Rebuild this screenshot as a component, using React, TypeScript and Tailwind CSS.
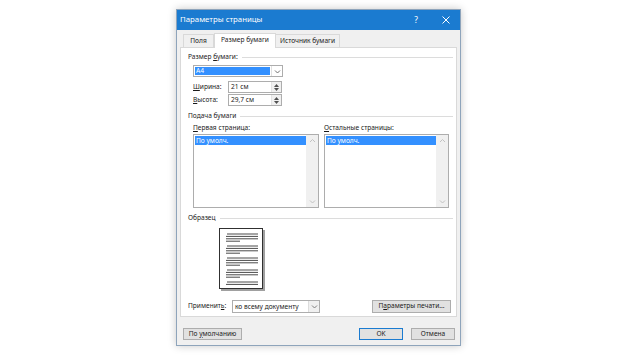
import React from "react";

const Chevron = ({ up = false, color = "#606060" }: { up?: boolean; color?: string }) => (
  <svg width="7" height="5" viewBox="0 0 7 5" className="block">
    <path d={up ? "M1 4 L3.5 1.5 L6 4" : "M1 1.5 L3.5 4 L6 1.5"} fill="none" stroke={color} strokeWidth="1" />
  </svg>
);

const Spinner = () => (
  <div className="w-[10px] h-full flex flex-col items-center justify-center gap-[1px] bg-[#f0f0f0] border-l border-[#e3e3e3]">
    <svg width="5" height="3" viewBox="0 0 5 3" className="block">
      <path d="M0 3 L2.5 0 L5 3 Z" fill="#505050" />
    </svg>
    <svg width="5" height="3" viewBox="0 0 5 3" className="block">
      <path d="M0 0 L2.5 3 L5 0 Z" fill="#505050" />
    </svg>
  </div>
);

const SectionLabel = ({ children, mt }: { children: React.ReactNode; mt: string }) => (
  <div className={`flex items-center h-[10px] pl-[7px] pr-[3px] ${mt}`}>
    <span className="leading-none whitespace-nowrap">{children}</span>
    <div className="flex-1 h-px bg-[#dcdcdc] ml-[4px]" />
  </div>
);

const ListBox = ({ w }: { w: string }) => (
  <div className={`${w} h-[74px] border border-[#adadad] bg-white flex`}>
    <div className="flex-1 pt-px pl-px">
      <div className="h-[9px] bg-[#3390ff] text-white leading-[9px] pl-[1px]">По умолч.</div>
    </div>
    <div className="w-[12px] bg-[#f0f0f0] flex flex-col items-center justify-between py-[3px]">
      <Chevron up color="#c2c2c2" />
      <Chevron color="#c2c2c2" />
    </div>
  </div>
);

const Preview = () => {
  const lines: React.ReactNode[] = [];
  const starts = [5, 17, 29, 41, 53];
  starts.forEach((s, pi) => {
    for (let i = 0; i < 4; i++) {
      const y = s + i * 2.4;
      if (y > 57) break;
      const x1 = i === 0 ? 7 : 6;
      const x2 = i === 3 ? 20 : 38;
      lines.push(<line key={`${pi}-${i}`} x1={x1} x2={x2} y1={y} y2={y} stroke="#4a4a4a" strokeWidth="1" />);
    }
  });
  return (
    <div className="ml-[38px] mt-[5px] w-[44px] h-[61px] bg-white border border-[#303030] shadow-[2px_2px_0_#a0a0a0]">
      <svg width="42" height="59" viewBox="0 0 42 59" className="block">
        {lines}
      </svg>
    </div>
  );
};

export default function App() {
  return (
    <div className="w-[640px] h-[360px] bg-white pt-[9px] pl-[176px] font-['Noto_Sans',sans-serif] text-[6.6px] text-[#1a1a1a]">
      <div className="w-[285px] h-[337px] flex flex-col bg-[#f0f0f0] border border-[#8ea4bb] shadow-[0_0_8px_rgba(0,0,0,0.22)]">
        {/* Title bar */}
        <div className="h-[20px] bg-[#1b7bd0] flex items-center text-white">
          <span className="pl-[3px] text-[7.8px] leading-none">Параметры страницы</span>
          <div className="flex-1" />
          <span className="text-[8.5px] leading-none mr-[24px]">?</span>
          <svg width="8" height="8" viewBox="0 0 8 8" className="block mr-[10px]">
            <path d="M0.5 0.5 L7.5 7.5 M7.5 0.5 L0.5 7.5" stroke="white" strokeWidth="1" />
          </svg>
        </div>

        {/* Body */}
        <div className="flex-1 flex flex-col px-[3px]">
          {/* Tabs */}
          <div className="mt-[2px] h-[15px] flex items-end pl-[3px] relative z-10">
            <div className="w-[31px] h-[13px] flex items-center justify-center border border-b-0 border-[#d9d9d9] bg-[#f0f0f0] leading-none">
              Поля
            </div>
            <div className="w-[62px] h-[15px] flex items-center justify-center border border-b-0 border-[#d9d9d9] bg-white leading-none -mb-px pb-px">
              Размер бумаги
            </div>
            <div className="w-[64px] h-[13px] flex items-center justify-center border border-b-0 border-l-0 border-[#d9d9d9] bg-[#f0f0f0] leading-none">
              Источник бумаги
            </div>
          </div>

          {/* Panel */}
          <div className="h-[270px] bg-white border border-[#d9d9d9] flex flex-col">
            <SectionLabel mt="mt-[4px]">
              Размер <span className="underline">б</span>умаги:
            </SectionLabel>

            {/* A4 combo */}
            <div className="ml-[12px] mt-[3px] w-[90px] h-[12px] border border-[#adadad] bg-white flex">
              <div className="flex-1 m-px bg-[#3390ff] text-white leading-[8px] pl-[1px]">A4</div>
              <div className="w-[11px] flex items-center justify-center border-l border-[#e0e0e0]">
                <Chevron color="#707070" />
              </div>
            </div>

            {/* Width */}
            <div className="ml-[12px] mt-[4px] h-[12px] flex items-center">
              <span className="w-[35px] leading-none">
                <span className="underline">Ш</span>ирина:
              </span>
              <div className="w-[54px] h-[12px] border border-[#adadad] bg-white flex">
                <span className="flex-1 pl-[2px] leading-[10px]">21 см</span>
                <Spinner />
              </div>
            </div>
            {/* Height */}
            <div className="ml-[12px] mt-[1px] h-[12px] flex items-center">
              <span className="w-[35px] leading-none">
                <span className="underline">В</span>ысота:
              </span>
              <div className="w-[54px] h-[12px] border border-[#adadad] bg-white flex">
                <span className="flex-1 pl-[2px] leading-[10px]">29,7 см</span>
                <Spinner />
              </div>
            </div>

            <SectionLabel mt="mt-[5px]">Подача бумаги</SectionLabel>

            <div className="ml-[12px] mt-[2px] h-[10px] flex items-center leading-none">
              <span className="w-[131px]">
                <span className="underline">П</span>ервая страница:
              </span>
              <span>
                <span className="underline">О</span>стальные страницы:
              </span>
            </div>
            <div className="ml-[12px] mt-[1px] flex gap-[5px]">
              <ListBox w="w-[126px]" />
              <ListBox w="w-[125px]" />
            </div>

            <SectionLabel mt="mt-[5px]">Образец</SectionLabel>
            <Preview />

            {/* Apply row */}
            <div className="mt-[11px] h-[13px] flex items-center pl-[7px] pr-[5px]">
              <span className="w-[44px] leading-none">
                Применит<span className="underline">ь</span>:
              </span>
              <div className="w-[88px] h-[13px] border border-[#adadad] bg-white flex">
                <span className="flex-1 pl-[2px] leading-[11px]">ко всему документу</span>
                <div className="w-[11px] flex items-center justify-center bg-[#f0f0f0] border-l border-[#dcdcdc]">
                  <Chevron color="#808080" />
                </div>
              </div>
              <div className="flex-1" />
              <div className="w-[79px] h-[13px] border border-[#adadad] bg-[#e1e1e1] flex items-center justify-center leading-none">
                <span>
                  П<span className="underline">а</span>раметры печати...
                </span>
              </div>
            </div>
          </div>

          {/* Buttons */}
          <div className="mt-[11px] h-[12px] flex pl-[3px] pr-[2px]">
            <div className="w-[59px] h-[12px] border border-[#adadad] bg-[#e1e1e1] flex items-center justify-center leading-none">
              <span>
                По <span className="underline">у</span>молчанию
              </span>
            </div>
            <div className="flex-1" />
            <div className="w-[44px] h-[12px] border border-[#1b7bd0] bg-[#e1e1e1] flex items-center justify-center leading-none">
              OK
            </div>
            <div className="w-[44px] h-[12px] ml-[8px] border border-[#adadad] bg-[#e1e1e1] flex items-center justify-center leading-none">
              Отмена
            </div>
          </div>
        </div>
      </div>
    </div>
  );
}
